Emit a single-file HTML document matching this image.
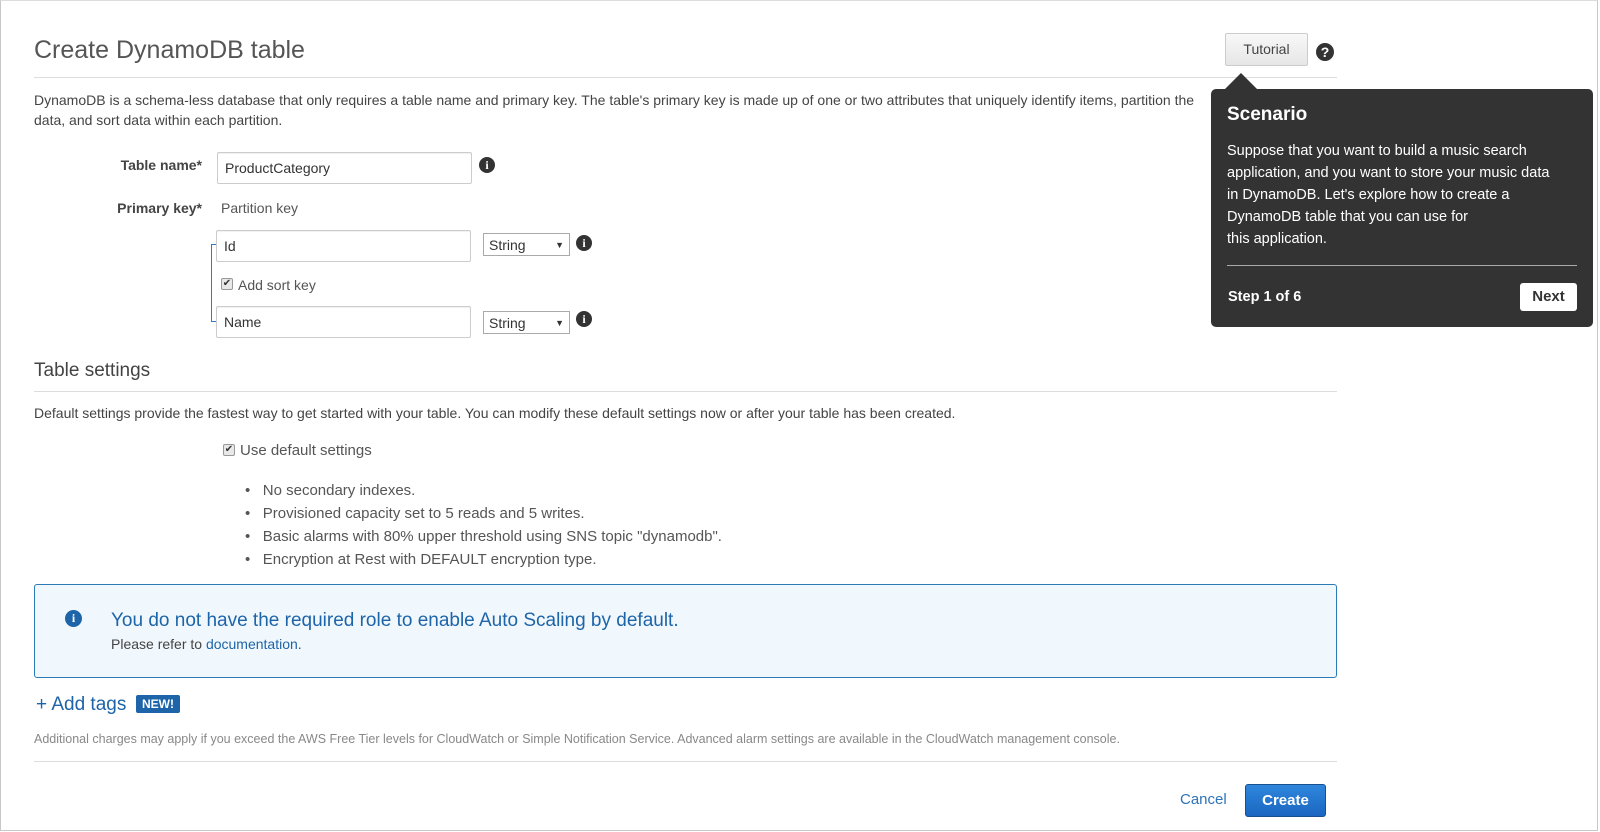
<!DOCTYPE html>
<html><head><meta charset="utf-8"><style>
*{box-sizing:border-box;margin:0;padding:0}
body{width:1600px;height:832px;background:#fff;font-family:"Liberation Sans",Arial,sans-serif;color:#444;position:relative;overflow:hidden}
.a{position:absolute;white-space:nowrap}
.frame{position:absolute;left:0;top:0;width:1598px;height:831px;border:1px solid #c8c8c8;border-top-color:#ddd}
.rule{position:absolute;left:34px;width:1303px;height:1px;background:#ddd}
.inp{position:absolute;border:1px solid #ccc;border-radius:2px;background:#fff;font-size:14px;color:#333;padding-left:7px;display:flex;align-items:center;box-shadow:inset 0 1px 1px rgba(0,0,0,.06)}
.sel{position:absolute;border:1px solid #aaa;background:#fff;font-size:14px;color:#333;padding-left:5px;display:flex;align-items:center;width:87px;height:23px}
.sel:after{content:"▼";position:absolute;right:5px;font-size:9px;top:6px}
.info{position:absolute;width:16px;height:16px;border-radius:50%;background:#333;color:#fff;font:bold 12px "Liberation Serif",serif;text-align:center;line-height:16px}
.cb{position:absolute;width:12px;height:12px;border:1px solid #999;border-radius:2px;background:#e8e8e8;font-size:10px;line-height:10px;text-align:center;color:#333}
.lbl{font-weight:bold;font-size:14px;color:#444}
</style></head><body>
<div class="frame"></div>
<div class="a" style="left:34px;top:36px;font-size:25px;color:#555">Create DynamoDB table</div>
<div class="rule" style="top:77px"></div>
<div class="a" style="left:1225px;top:33px;width:83px;height:33px;border:1px solid #ccc;border-radius:2px;background:linear-gradient(#f8f8f8,#e6e6e6);font-size:14px;color:#444;text-align:center;line-height:31px">Tutorial</div>
<div class="a" style="left:1316px;top:43px;width:18px;height:18px;border-radius:50%;background:#333;color:#fff;font:bold 14px sans-serif;text-align:center;line-height:18px">?</div>
<div class="a" style="left:34px;top:90px;font-size:14px;line-height:20px;color:#444">DynamoDB is a schema-less database that only requires a table name and primary key. The table's primary key is made up of one or two attributes that uniquely identify items, partition the<br>data, and sort data within each partition.</div>

<div class="a lbl" style="right:1398px;top:157px">Table name*</div>
<div class="inp" style="left:217px;top:152px;width:255px;height:32px">ProductCategory</div>
<div class="info" style="left:479px;top:157px">i</div>
<div class="a lbl" style="right:1398px;top:200px">Primary key*</div>
<div class="a" style="left:221px;top:200px;font-size:14px;color:#555">Partition key</div>
<div class="a" style="left:211px;top:244px;width:6px;height:78px;border:1px solid #2d7bc4;border-right:none"></div>
<div class="inp" style="left:216px;top:230px;width:255px;height:32px">Id</div>
<div class="sel" style="left:483px;top:233px">String</div>
<div class="info" style="left:576px;top:235px">i</div>
<div class="cb" style="left:221px;top:278px">✔</div>
<div class="a" style="left:238px;top:277px;font-size:14px;color:#555">Add sort key</div>
<div class="inp" style="left:216px;top:306px;width:255px;height:32px">Name</div>
<div class="sel" style="left:483px;top:311px">String</div>
<div class="info" style="left:576px;top:311px">i</div>

<div class="a" style="left:34px;top:360px;font-size:19px;color:#444">Table settings</div>
<div class="rule" style="top:391px"></div>
<div class="a" style="left:34px;top:405px;font-size:14px;color:#444">Default settings provide the fastest way to get started with your table. You can modify these default settings now or after your table has been created.</div>
<div class="cb" style="left:223px;top:444px">✔</div>
<div class="a" style="left:240px;top:442px;font-size:15px;color:#555">Use default settings</div>
<div class="a" style="left:245px;top:479px;font-size:15px;line-height:23px;color:#555">•&nbsp;&nbsp; No secondary indexes.<br>•&nbsp;&nbsp; Provisioned capacity set to 5 reads and 5 writes.<br>•&nbsp;&nbsp; Basic alarms with 80% upper threshold using SNS topic "dynamodb".<br>•&nbsp;&nbsp; Encryption at Rest with DEFAULT encryption type.</div>

<div class="a" style="left:34px;top:584px;width:1303px;height:94px;border:1px solid #2b7bb9;border-radius:3px;background:#f0f8fd"></div>
<div class="info" style="left:65px;top:610px;width:17px;height:17px;background:#1e64a8;line-height:17px">i</div>
<div class="a" style="left:111px;top:610px;font-size:19px;color:#1e64a8">You do not have the required role to enable Auto Scaling by default.</div>
<div class="a" style="left:111px;top:636px;font-size:14px;color:#444">Please refer to <span style="color:#1e64a8">documentation</span>.</div>

<div class="a" style="left:36px;top:694px;font-size:19px;color:#1e64a8">+ Add tags</div>
<div class="a" style="left:136px;top:695px;width:44px;height:18px;background:#1e64a8;border-radius:2px;color:#fff;font:bold 12px sans-serif;text-align:center;line-height:18px">NEW!</div>
<div class="a" style="left:34px;top:732px;font-size:12.5px;color:#888">Additional charges may apply if you exceed the AWS Free Tier levels for CloudWatch or Simple Notification Service. Advanced alarm settings are available in the CloudWatch management console.</div>
<div class="rule" style="top:761px"></div>
<div class="a" style="left:1180px;top:791px;font-size:15px;color:#2e73b8">Cancel</div>
<div class="a" style="left:1245px;top:784px;width:81px;height:33px;border:1px solid #19508f;border-radius:3px;background:linear-gradient(#2f86dc,#1a66c0);color:#fff;font:bold 15px sans-serif;text-align:center;line-height:31px">Create</div>

<div class="a" style="left:1224px;top:73px;width:0;height:0;border-left:17px solid transparent;border-right:17px solid transparent;border-bottom:17px solid #333"></div>
<div class="a" style="left:1211px;top:89px;width:382px;height:238px;background:#333;border-radius:5px"></div>
<div class="a" style="left:1227px;top:104px;font:bold 19px sans-serif;color:#fff">Scenario</div>
<div class="a" style="left:1227px;top:140px;font-size:14.5px;line-height:22px;color:#fff">Suppose that you want to build a music search<br>application, and you want to store your music data<br>in DynamoDB. Let's explore how to create a<br>DynamoDB table that you can use for<br>this application.</div>
<div class="a" style="left:1227px;top:265px;width:350px;height:1px;background:#aaa"></div>
<div class="a" style="left:1228px;top:289px;font:bold 14.5px sans-serif;color:#fff">Step 1 of 6</div>
<div class="a" style="left:1520px;top:283px;width:57px;height:28px;background:#fff;border-radius:3px;color:#333;font:bold 15px sans-serif;text-align:center;line-height:28px">Next</div>
</body></html>
